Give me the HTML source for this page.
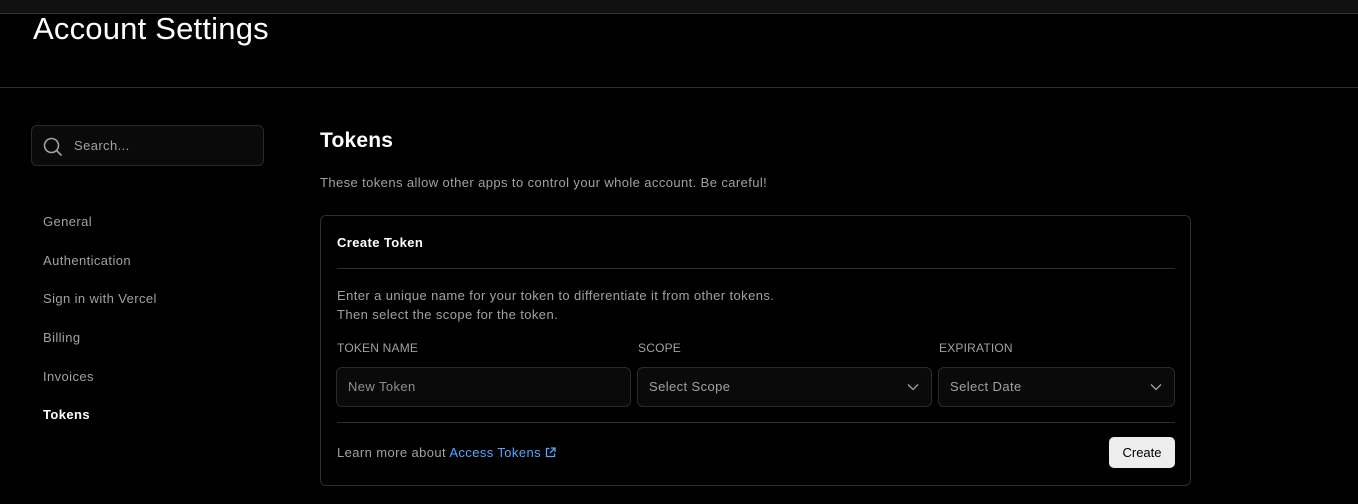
<!DOCTYPE html>
<html><head><meta charset="utf-8"><style>
*{box-sizing:border-box;margin:0;padding:0}
body{width:1358px;height:504px;background:#000;color:#ededed;font-family:"Liberation Sans",sans-serif;position:relative;overflow:hidden;letter-spacing:0.4px}
.topbar{position:absolute;left:0;top:0;width:1358px;height:14px;background:#111;border-bottom:1px solid #333}
h1{position:absolute;left:33px;top:11px;font-size:31px;font-weight:400;color:#fff;letter-spacing:0.2px}
.hline{position:absolute;left:0;top:87px;width:1358px;height:1px;background:#2e2e2e}
.search{position:absolute;left:31px;top:125px;width:233px;height:41px;border:1px solid #2a2a2a;border-radius:6px;background:#0a0a0a}
.search span{position:absolute;left:42px;top:12px;font-size:13px;color:#a1a1a1}
.search svg{position:absolute;left:10px;top:10px}
.nav{position:absolute;left:43px;font-size:13px;color:#a1a1a1}
h2{position:absolute;left:320px;top:129px;font-size:21px;font-weight:700;color:#fff;letter-spacing:0.2px}
.desc{position:absolute;left:320px;top:175px;font-size:13px;color:#a1a1a1}
.card{position:absolute;left:320px;top:215px;width:871px;height:271px;border:1px solid #2e2e2e;border-radius:6px}
.abs{position:absolute}
.lbl{font-size:12px;color:#a1a1a1;top:125px;letter-spacing:0.2px}
.inp{top:151px;height:40px;border:1px solid #2a2a2a;border-radius:6px;background:#0a0a0a;font-size:13px;color:#8f8f8f;padding:11px 0 0 11px}
.inp svg{position:absolute;right:12px;top:15px}
.btn{right:15px;top:221px;width:66px;height:31px;background:#ededed;color:#000;border-radius:5px;font-size:13px;text-align:center;line-height:31px;letter-spacing:0}
</style></head><body>
<div class="topbar"></div>
<h1>Account Settings</h1>
<div class="hline"></div>
<div class="search"><svg width="22" height="22" viewBox="0 0 22 22" fill="none" stroke="#a1a1a1" stroke-width="1.6"><circle cx="9.5" cy="9.5" r="7"/><path d="M14.5 14.5l5 5"/></svg><span>Search...</span></div>
<div class="nav" style="top:214px">General</div>
<div class="nav" style="top:253px">Authentication</div>
<div class="nav" style="top:291px">Sign in with Vercel</div>
<div class="nav" style="top:330px">Billing</div>
<div class="nav" style="top:369px">Invoices</div>
<div class="nav" style="top:407px;color:#fff;font-weight:700">Tokens</div>
<h2>Tokens</h2>
<div class="desc">These tokens allow other apps to control your whole account. Be careful!</div>
<div class="card">
<div class="abs" style="left:16px;top:19px;font-size:13px;font-weight:700;color:#fff">Create Token</div>
<div class="abs" style="left:16px;top:52px;width:838px;height:1px;background:#2e2e2e"></div>
<div class="abs" style="left:16px;top:70px;font-size:13px;color:#a1a1a1;line-height:19px">Enter a unique name for your token to differentiate it from other tokens.<br>Then select the scope for the token.</div>
<div class="abs lbl" style="left:16px">TOKEN NAME</div>
<div class="abs lbl" style="left:317px">SCOPE</div>
<div class="abs lbl" style="left:618px">EXPIRATION</div>
<div class="abs inp" style="left:15px;width:295px">New Token</div>
<div class="abs inp" style="left:316px;width:295px;color:#a1a1a1">Select Scope<svg width="12" height="8" viewBox="0 0 12 8" fill="none" stroke="#a1a1a1" stroke-width="1.3"><path d="M1 1.5l5 5 5-5"/></svg></div>
<div class="abs inp" style="left:617px;width:237px;color:#a1a1a1">Select Date<svg width="12" height="8" viewBox="0 0 12 8" fill="none" stroke="#a1a1a1" stroke-width="1.3"><path d="M1 1.5l5 5 5-5"/></svg></div>
<div class="abs" style="left:16px;top:206px;width:838px;height:1px;background:#2e2e2e"></div>
<div class="abs" style="left:16px;top:229px;font-size:13px;color:#a1a1a1">Learn more about <span style="color:#52a8ff">Access Tokens <svg width="11" height="11" viewBox="0 0 11 11" fill="none" stroke="#52a8ff" stroke-width="1.3" style="vertical-align:-1px"><path d="M4.5 1.5H1.5v8h8V6.5M6 1h4v4M10 1L5 6"/></svg></span></div>
<div class="abs btn">Create</div>
</div>
</body></html>
